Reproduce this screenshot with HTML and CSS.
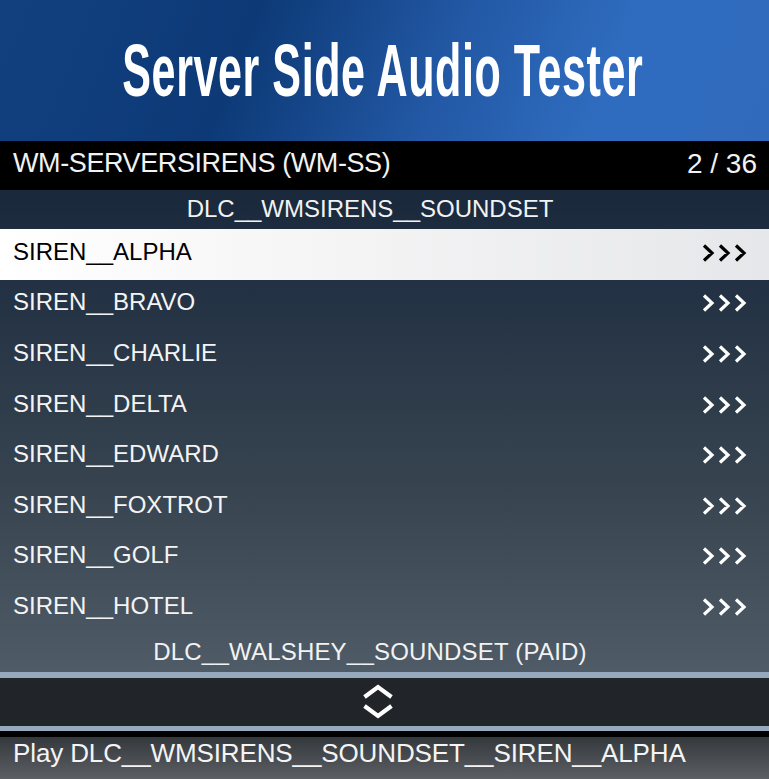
FILE: index.html
```html
<!DOCTYPE html>
<html>
<head>
<meta charset="utf-8">
<link rel="stylesheet" href="styles.css">
</head>
<body>
<div class="menu">
  <header class="banner">
    <h1 class="title"><span class="title-text">Server Side Audio Tester</span></h1>
  </header>
  <div class="subtitle">
    <span class="sub-label">WM-SERVERSIRENS (WM-SS)</span>
    <span class="sub-count">2 / 36</span>
  </div>
  <div class="list">
    <div class="section">DLC__WMSIRENS__SOUNDSET</div>
    <div class="item selected"><span class="label">SIREN__ALPHA</span><svg class="chev" viewBox="0 0 46 20" width="46" height="20"><path d="M3 2.5 L11 10 L3 17.5 M19 2.5 L27 10 L19 17.5 M35 2.5 L43 10 L35 17.5" fill="none" stroke="currentColor" stroke-width="3.2"/></svg></div>
    <div class="item"><span class="label">SIREN__BRAVO</span><svg class="chev" viewBox="0 0 46 20" width="46" height="20"><path d="M3 2.5 L11 10 L3 17.5 M19 2.5 L27 10 L19 17.5 M35 2.5 L43 10 L35 17.5" fill="none" stroke="currentColor" stroke-width="3.2"/></svg></div>
    <div class="item"><span class="label">SIREN__CHARLIE</span><svg class="chev" viewBox="0 0 46 20" width="46" height="20"><path d="M3 2.5 L11 10 L3 17.5 M19 2.5 L27 10 L19 17.5 M35 2.5 L43 10 L35 17.5" fill="none" stroke="currentColor" stroke-width="3.2"/></svg></div>
    <div class="item"><span class="label">SIREN__DELTA</span><svg class="chev" viewBox="0 0 46 20" width="46" height="20"><path d="M3 2.5 L11 10 L3 17.5 M19 2.5 L27 10 L19 17.5 M35 2.5 L43 10 L35 17.5" fill="none" stroke="currentColor" stroke-width="3.2"/></svg></div>
    <div class="item"><span class="label">SIREN__EDWARD</span><svg class="chev" viewBox="0 0 46 20" width="46" height="20"><path d="M3 2.5 L11 10 L3 17.5 M19 2.5 L27 10 L19 17.5 M35 2.5 L43 10 L35 17.5" fill="none" stroke="currentColor" stroke-width="3.2"/></svg></div>
    <div class="item"><span class="label">SIREN__FOXTROT</span><svg class="chev" viewBox="0 0 46 20" width="46" height="20"><path d="M3 2.5 L11 10 L3 17.5 M19 2.5 L27 10 L19 17.5 M35 2.5 L43 10 L35 17.5" fill="none" stroke="currentColor" stroke-width="3.2"/></svg></div>
    <div class="item"><span class="label">SIREN__GOLF</span><svg class="chev" viewBox="0 0 46 20" width="46" height="20"><path d="M3 2.5 L11 10 L3 17.5 M19 2.5 L27 10 L19 17.5 M35 2.5 L43 10 L35 17.5" fill="none" stroke="currentColor" stroke-width="3.2"/></svg></div>
    <div class="item"><span class="label">SIREN__HOTEL</span><svg class="chev" viewBox="0 0 46 20" width="46" height="20"><path d="M3 2.5 L11 10 L3 17.5 M19 2.5 L27 10 L19 17.5 M35 2.5 L43 10 L35 17.5" fill="none" stroke="currentColor" stroke-width="3.2"/></svg></div>
    <div class="section section-last">DLC__WALSHEY__SOUNDSET (PAID)</div>
  </div>
  <div class="scroller">
    <svg class="updown" viewBox="0 0 34 38" width="34" height="38"><path d="M3.5 14 L17 4 L30.5 14 M3.5 23 L17 33 L30.5 23" fill="none" stroke="#ffffff" stroke-width="4.2"/></svg>
  </div>
  <div class="desc">Play DLC__WMSIRENS__SOUNDSET__SIREN__ALPHA</div>
</div>
</body>
</html>
```

FILE: styles.css
```css
html, body {
  margin: 0;
  padding: 0;
  background: #000;
}

.menu {
  width: 769px;
  height: 779px;
  overflow: hidden;
  display: flex;
  flex-direction: column;
  font-family: "Liberation Sans", Arial, sans-serif;
  color: #f4f4f4;
}

.banner {
  height: 141px;
  flex: 0 0 141px;
  display: flex;
  align-items: center;
  justify-content: center;
  background: linear-gradient(112deg, #123f7e 0%, #0d3a77 32%, #2359a6 58%, #2f6cbf 78%, #2f6abd 100%);
}

.title {
  margin: 0;
  font-size: 75px;
  line-height: 75px;
  font-weight: bold;
  color: #ffffff;
  white-space: nowrap;
  padding: 0 4px 0 0;
}

.title-text {
  display: inline-block;
  transform: scaleX(0.574);
  transform-origin: center;
  letter-spacing: 1px;
}

.subtitle {
  height: 49px;
  flex: 0 0 49px;
  background: #000;
  display: flex;
  align-items: center;
  justify-content: space-between;
  padding: 0 12px 4px 13px;
  box-sizing: border-box;
}

.sub-label {
  font-size: 27px;
  line-height: 27px;
  letter-spacing: -0.4px;
  color: #f2f2f2;
}

.sub-count {
  font-size: 28px;
  line-height: 28px;
  color: #f2f2f2;
}

.list {
  flex: 0 0 auto;
  display: flex;
  flex-direction: column;
  background: linear-gradient(180deg, #1a283b 0%, #202f42 15%, #36434f 60%, #4f5c68 100%);
}

.section {
  height: 39px;
  display: flex;
  align-items: center;
  justify-content: center;
  font-size: 24px;
  line-height: 24px;
  padding: 0 29px 1px 0;
  box-sizing: border-box;
  color: #f2f2f2;
}

.section-last {
  height: 38.5px;
  padding-bottom: 2px;
  letter-spacing: 0.2px;
}

.item {
  height: 50.6px;
  display: flex;
  align-items: center;
  justify-content: space-between;
  padding: 0 22px 5px 13px;
  box-sizing: border-box;
  font-size: 24px;
  line-height: 24px;
  color: #f4f4f4;
}

.item.selected {
  background: linear-gradient(90deg, #ffffff 0%, #f3f3f4 50%, #e6e7ea 100%);
  color: #000;
}

.chev {
  display: block;
  color: #ffffff;
  margin-top: 2px;
}

.item.selected .chev {
  color: #000;
}

.scroller {
  flex: 0 0 48px;
  height: 48px;
  background: #212529;
  border-top: 6px solid #97aabd;
  border-bottom: 5px solid #97aabd;
  display: flex;
  align-items: center;
  justify-content: center;
  padding-right: 13px;
}

.updown {
  display: block;
}

.desc {
  flex: 1 1 auto;
  margin-top: 6px;
  padding: 3px 13px 0;
  font-size: 26px;
  line-height: 26px;
  letter-spacing: -0.12px;
  color: #f4f4f4;
  background: linear-gradient(180deg, #34393e 0%, #484c51 50%, #5c6065 100%);
}
```
